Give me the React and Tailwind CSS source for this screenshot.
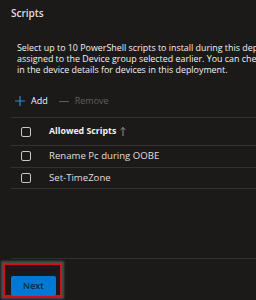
export default function App() {
  const rows = ["Rename Pc during OOBE", "Set-TimeZone"];

  return (
    <div
      className="w-[256px] h-[300px] overflow-hidden bg-[#1b1a19] text-[#f3f2f1] flex flex-col"
      style={{ fontFamily: '"Open Sans", "Noto Sans", sans-serif' }}
    >
      <div className="pl-[11px] pt-[6px] text-[10px] font-semibold leading-[14px] text-[#e1dfdd]">
        Scripts
      </div>

      <p className="pl-[17px] mt-[22px] text-[8.9px] leading-[11px] whitespace-nowrap font-medium">
        Select up to 10 PowerShell scripts to install during this deployment. These will be
        <br />
        assigned to the Device group selected earlier. You can check the status
        <br />
        in the device details for devices in this deployment.
      </p>

      <div className="flex items-center pl-[15px] mt-[19px] h-[14px] text-[9px]">
        <svg width="10" height="10" viewBox="0 0 10 10" className="mr-[6px]">
          <path d="M5 0v10M0 5h10" stroke="#2b88d8" strokeWidth="1.2" />
        </svg>
        <span className="text-[#f3f2f1]">Add</span>
        <span className="ml-[11px] w-[10px] border-t border-[#605e5c]" />
        <span className="ml-[6px] text-[#605e5c]">Remove</span>
      </div>

      <div className="ml-[11px] mt-[9px] border-t border-[#323130]" />

      <div className="ml-[11px] h-[28px] flex items-center border-b border-[#323130]">
        <span className="ml-[10px] w-[10px] h-[10px] rounded-[2px] border border-[#c8c6c4]" />
        <span className="ml-[18px] text-[8.8px] font-bold">Allowed Scripts</span>
        <svg width="6" height="9" viewBox="0 0 6 9" className="ml-[4px]">
          <path d="M3 0.5V9M0.6 2.9L3 0.5L5.4 2.9" stroke="#a19f9d" strokeWidth="0.9" fill="none" />
        </svg>
      </div>

      {rows.map((r) => (
        <div
          key={r}
          className="ml-[11px] h-[21.5px] flex items-center border-b border-[#323130]"
        >
          <span className="ml-[10px] w-[10px] h-[10px] rounded-[2px] border border-[#c8c6c4]" />
          <span className="ml-[18px] text-[9.6px] text-[#e1dfdd]">{r}</span>
        </div>
      ))}

      <div className="flex-1" />

      <div className="ml-[11px] border-t border-[#323130]" />

      <div className="h-[41px] pt-[4px] pl-[3px]">
        <div className="w-[59px] h-[34px] border-2 border-[#d1111b] shadow-[0_0_2px_2px_rgba(120,120,120,0.55)] pl-[6px] pt-[6px]">
          <button className="w-[45px] h-[20px] bg-[#0078d4] rounded-[2px] text-[9px] font-semibold text-[#0c2a44] leading-none">
            Next
          </button>
        </div>
      </div>
    </div>
  );
}
